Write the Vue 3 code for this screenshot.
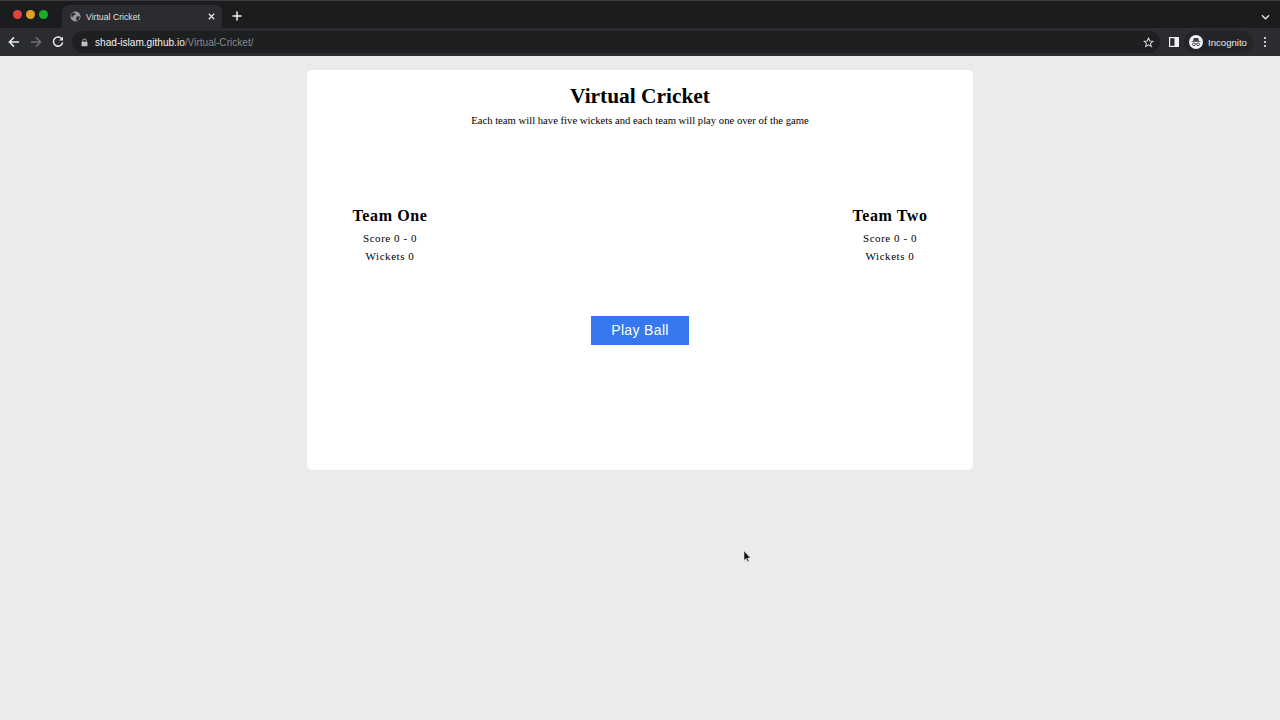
<script setup>
const teams = [
  { name: 'Team One', score: 'Score 0 - 0', wickets: 'Wickets 0' },
  { name: 'Team Two', score: 'Score 0 - 0', wickets: 'Wickets 0' }
]
</script>

<template>
  <div class="screen">
    <header class="browser">
      <div class="tabstrip">
        <div class="lights">
          <span class="light red"></span>
          <span class="light amber"></span>
          <span class="light green"></span>
        </div>
        <div class="tab">
          <svg class="globe" viewBox="0 0 12 12" width="11" height="11">
            <circle cx="6" cy="6" r="5.5" fill="#9a9b9e" />
            <path d="M3 1.6 L6 2.6 L5.6 4.4 L3.6 5 L2.6 7 L1 5.4 Z M7.6 5.6 L10.8 6 L9.6 9.6 L7.4 10.8 L6.6 8 Z" fill="#2b2c2f" />
          </svg>
          <span class="tab-title">Virtual Cricket</span>
          <svg class="tab-close" viewBox="0 0 10 10" width="9" height="9">
            <path d="M2 2 L8 8 M8 2 L2 8" stroke="#e4e5e7" stroke-width="1.4" fill="none" />
          </svg>
        </div>
        <svg class="plus" viewBox="0 0 10 10" width="10" height="10">
          <path d="M5 .5 V9.5 M.5 5 H9.5" stroke="#f1f2f3" stroke-width="1.5" fill="none" />
        </svg>
        <svg class="chevron" viewBox="0 0 10 6" width="9" height="6">
          <path d="M1 1 L5 5 L9 1" stroke="#e4e5e7" stroke-width="1.5" fill="none" />
        </svg>
      </div>
      <div class="toolbar">
        <svg class="nav" viewBox="0 0 12 12" width="12" height="12">
          <path d="M11 6 H1.6 M6 1.4 L1.4 6 L6 10.6" stroke="#e8eaed" stroke-width="1.5" fill="none" />
        </svg>
        <svg class="nav" viewBox="0 0 12 12" width="12" height="12">
          <path d="M1 6 H10.4 M6 1.4 L10.6 6 L6 10.6" stroke="#6e6f73" stroke-width="1.5" fill="none" />
        </svg>
        <svg class="nav" viewBox="0 0 12 12" width="12" height="12">
          <path d="M10 3.2 A4.6 4.6 0 1 0 10.6 6.4" stroke="#e8eaed" stroke-width="1.5" fill="none" />
          <path d="M11 .8 V4.6 H7.2 Z" fill="#e8eaed" />
        </svg>
        <div class="omnibox">
          <svg class="lock" viewBox="0 0 8 10" width="7" height="9">
            <path d="M2 4.4 V3 a2 2 0 0 1 4 0 V4.4" stroke="#bfc0c3" stroke-width="1" fill="none" />
            <rect x=".6" y="4.2" width="6.8" height="5.2" rx=".8" fill="#bfc0c3" />
          </svg>
          <span class="host">shad-islam.github.io</span><span class="path">/Virtual-Cricket/</span>
          <svg class="star" viewBox="0 0 12 12" width="11" height="11">
            <path d="M6 1.2 L7.4 4.4 L10.9 4.7 L8.2 7 L9 10.4 L6 8.6 L3 10.4 L3.8 7 L1.1 4.7 L4.6 4.4 Z" stroke="#d5d6d8" stroke-width="1.1" fill="none" />
          </svg>
        </div>
        <svg class="side" viewBox="0 0 10 10" width="10" height="10">
          <rect x=".6" y=".6" width="8.8" height="8.8" fill="none" stroke="#f1f2f3" stroke-width="1.2" />
          <rect x="5.5" y="1" width="4" height="8" fill="#f1f2f3" />
        </svg>
        <div class="incognito">
          <svg viewBox="0 0 14 14" width="14" height="14">
            <circle cx="7" cy="7" r="7" fill="#f1f2f3" />
            <path d="M4.8 3 H9.2 L10 6 H4 Z M2.6 6.2 H11.4 V7 H2.6 Z" fill="#3c3d40" />
            <circle cx="4.9" cy="9.3" r="1.4" fill="none" stroke="#3c3d40" stroke-width=".9" />
            <circle cx="9.1" cy="9.3" r="1.4" fill="none" stroke="#3c3d40" stroke-width=".9" />
            <path d="M6.3 9.1 H7.7" stroke="#3c3d40" stroke-width=".8" />
          </svg>
          <span>Incognito</span>
        </div>
        <svg class="menu" viewBox="0 0 4 12" width="4" height="12">
          <circle cx="2" cy="2" r="1.1" fill="#e8eaed" />
          <circle cx="2" cy="6" r="1.1" fill="#e8eaed" />
          <circle cx="2" cy="10" r="1.1" fill="#e8eaed" />
        </svg>
      </div>
    </header>

    <main class="page">
      <section class="card">
        <h1 class="title">Virtual Cricket</h1>
        <p class="subtitle">Each team will have five wickets and each team will play one over of the game</p>
        <div class="teams">
          <div v-for="team in teams" :key="team.name" class="team">
            <h2 class="team-name">{{ team.name }}</h2>
            <p class="team-line">{{ team.score }}</p>
            <p class="team-line">{{ team.wickets }}</p>
          </div>
        </div>
        <button class="play" type="button">Play Ball</button>
      </section>
    </main>

    <svg class="cursor" viewBox="0 0 8 13" width="8" height="13">
      <path d="M1 .8 V10.4 L3.2 8.4 L4.6 11.8 L6 11.2 L4.6 8 H7.4 Z" fill="#111" stroke="#f4f4f4" stroke-width=".5" />
    </svg>
  </div>
</template>

<style>
html, body { margin: 0; background: #ebebeb; }
</style>

<style scoped>
.screen {
  position: relative;
  width: 1280px;
  height: 720px;
  overflow: hidden;
  display: flex;
  flex-direction: column;
  background: #ebebeb;
  font-family: "Liberation Serif", serif;
}
.browser {
  height: 56px;
  flex: none;
  display: flex;
  flex-direction: column;
  font-family: "Liberation Sans", sans-serif;
}
.tabstrip {
  height: 28px;
  display: flex;
  align-items: flex-end;
  background: #1b1c1e;
  border-top: 1px solid #3a3b3d;
  box-sizing: border-box;
  padding-left: 13px;
}
.lights {
  display: flex;
  gap: 4px;
  align-self: flex-start;
  margin-top: 9px;
  width: 49px;
}
.light { width: 9px; height: 9px; border-radius: 50%; }
.red { background: #e0443e; }
.amber { background: #dea123; }
.green { background: #1aab29; }
.tab {
  width: 160px;
  height: 23px;
  box-sizing: border-box;
  padding: 0 6px 0 8px;
  display: flex;
  align-items: center;
  background: #2b2c2f;
  border-radius: 7px 7px 0 0;
  color: #dfe0e2;
  font-size: 8.7px;
}
.tab-title { margin-left: 5px; flex: 1; }
.plus { margin: 0 0 7px 10px; }
.chevron { margin: 0 10px 8px auto; }
.toolbar {
  height: 28px;
  display: flex;
  align-items: center;
  background: #2b2c2f;
  box-sizing: border-box;
  padding-left: 8px;
}
.nav { margin-right: 10px; }
.omnibox {
  width: 1088px;
  height: 22px;
  margin-left: -2px;
  box-sizing: border-box;
  padding: 0 6px 0 9px;
  display: flex;
  align-items: center;
  background: #1e1f21;
  border-radius: 11px;
  font-size: 10.1px;
}
.lock { margin-right: 7px; }
.host { color: #f1f2f3; }
.path { color: #85878a; }
.star { margin-left: auto; }
.side { margin-left: 9px; }
.incognito {
  display: flex;
  align-items: center;
  gap: 5px;
  margin-left: 5px;
  padding: 0 6px 0 5px;
  height: 22px;
  background: #232427;
  border-radius: 11px;
  color: #e8eaed;
  font-size: 9.6px;
}
.menu { margin-left: 10px; }
.page {
  flex: 1;
  display: flex;
  justify-content: center;
  align-items: flex-start;
  padding-top: 14px;
}
.card {
  width: 666px;
  height: 400px;
  box-sizing: border-box;
  background: #fff;
  border-radius: 5px;
  display: flex;
  flex-direction: column;
  align-items: center;
  color: #000;
}
.title {
  margin: 13px 0 0;
  font-size: 21.4px;
  line-height: 27px;
  font-weight: 700;
}
.subtitle {
  margin: 4px 0 0;
  font-size: 10.67px;
  line-height: 13px;
}
.teams {
  width: 100%;
  box-sizing: border-box;
  display: flex;
  justify-content: space-between;
  padding: 0 45px;
  margin-top: 80px;
}
.team {
  width: 76px;
  display: flex;
  flex-direction: column;
  align-items: center;
  white-space: nowrap;
}
.team-name {
  margin: 0 0 6px;
  font-size: 16px;
  line-height: 18px;
  font-weight: 700;
  letter-spacing: .6px;
}
.team-line {
  margin: 0 0 4px;
  font-size: 11px;
  line-height: 14px;
  letter-spacing: .55px;
}
.team-line:last-child { margin-bottom: 0; }
.play {
  width: 98px;
  height: 29px;
  margin-top: 53px;
  padding: 0 0 1px;
  border: 0;
  border-radius: 0;
  background: #3578f0;
  color: #fff;
  font-family: "Liberation Sans", sans-serif;
  font-size: 14px;
  letter-spacing: .35px;
}
.cursor {
  position: absolute;
  left: 743px;
  top: 550px;
}
</style>
